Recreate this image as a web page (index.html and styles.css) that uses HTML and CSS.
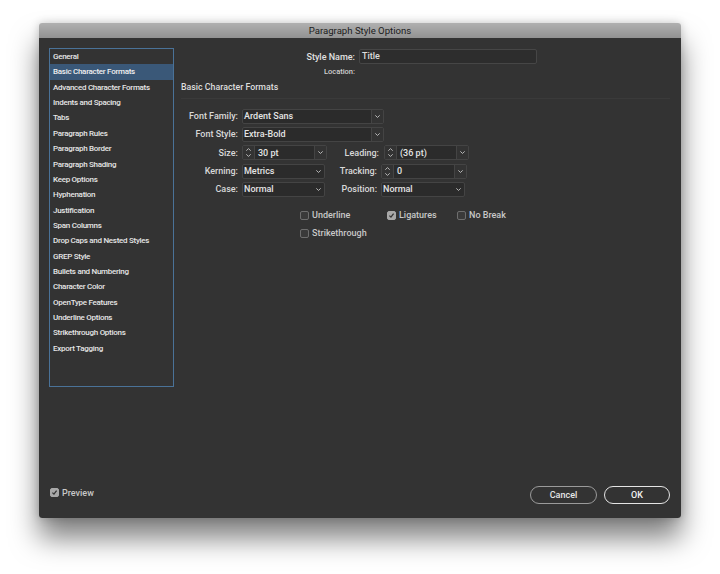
FILE: index.html
```html
<!DOCTYPE html>
<html lang="en">
<head>
    <meta charset="UTF-8">
    <title>Paragraph Style Options</title>
    <link rel="stylesheet" href="styles.css">
</head>
<body>
    <div class="window">
        <div class="titlebar">Paragraph Style Options</div>
        <div class="dialog">
            <div class="main">
                <ul class="sidebar">
                    <li>General</li>
                    <li class="selected">Basic Character Formats</li>
                    <li>Advanced Character Formats</li>
                    <li>Indents and Spacing</li>
                    <li>Tabs</li>
                    <li>Paragraph Rules</li>
                    <li>Paragraph Border</li>
                    <li>Paragraph Shading</li>
                    <li>Keep Options</li>
                    <li>Hyphenation</li>
                    <li>Justification</li>
                    <li>Span Columns</li>
                    <li>Drop Caps and Nested Styles</li>
                    <li>GREP Style</li>
                    <li>Bullets and Numbering</li>
                    <li>Character Color</li>
                    <li>OpenType Features</li>
                    <li>Underline Options</li>
                    <li>Strikethrough Options</li>
                    <li>Export Tagging</li>
                </ul>
                <div class="content">
                    <div class="name-row">
                        <span class="name-label">Style Name:</span>
                        <div class="name-input">Title</div>
                    </div>
                    <div class="location-row">Location:</div>
                    <h2 class="section-title">Basic Character Formats</h2>

                    <div class="form-row">
                        <span class="label">Font Family:</span>
                        <div class="select select-wide"><span class="value">Ardent Sans</span><span class="arrow-btn"><svg viewBox="0 0 8 5"><path d="M1.5 1.2 4 3.6 6.5 1.2"/></svg></span></div>
                    </div>
                    <div class="form-row">
                        <span class="label">Font Style:</span>
                        <div class="select select-wide"><span class="value">Extra-Bold</span><span class="arrow-btn"><svg viewBox="0 0 8 5"><path d="M1.5 1.2 4 3.6 6.5 1.2"/></svg></span></div>
                    </div>
                    <div class="form-row">
                        <span class="label">Size:</span>
                        <div class="select size-size">
                            <span class="spin"><svg viewBox="0 0 8 12"><path d="M1.5 4 4 1.5 6.5 4M1.5 8 4 10.5 6.5 8"/></svg></span>
                            <span class="value">30 pt</span>
                            <span class="arrow-btn"><svg viewBox="0 0 8 5"><path d="M1.5 1.2 4 3.6 6.5 1.2"/></svg></span>
                        </div>
                        <span class="label label-right">Leading:</span>
                        <div class="select leading-size gap-big">
                            <span class="spin"><svg viewBox="0 0 8 12"><path d="M1.5 4 4 1.5 6.5 4M1.5 8 4 10.5 6.5 8"/></svg></span>
                            <span class="value">(36 pt)</span>
                            <span class="arrow-btn"><svg viewBox="0 0 8 5"><path d="M1.5 1.2 4 3.6 6.5 1.2"/></svg></span>
                        </div>
                    </div>
                    <div class="form-row">
                        <span class="label">Kerning:</span>
                        <div class="select select-small"><span class="value">Metrics</span><span class="arrow-plain"><svg viewBox="0 0 8 5"><path d="M1.5 1.2 4 3.6 6.5 1.2"/></svg></span></div>
                        <span class="label label-right">Tracking:</span>
                        <div class="select tracking-size">
                            <span class="spin"><svg viewBox="0 0 8 12"><path d="M1.5 4 4 1.5 6.5 4M1.5 8 4 10.5 6.5 8"/></svg></span>
                            <span class="value">0</span>
                            <span class="arrow-btn"><svg viewBox="0 0 8 5"><path d="M1.5 1.2 4 3.6 6.5 1.2"/></svg></span>
                        </div>
                    </div>
                    <div class="form-row">
                        <span class="label">Case:</span>
                        <div class="select select-small"><span class="value">Normal</span><span class="arrow-plain"><svg viewBox="0 0 8 5"><path d="M1.5 1.2 4 3.6 6.5 1.2"/></svg></span></div>
                        <span class="label label-right">Position:</span>
                        <div class="select position-size"><span class="value">Normal</span><span class="arrow-plain"><svg viewBox="0 0 8 5"><path d="M1.5 1.2 4 3.6 6.5 1.2"/></svg></span></div>
                    </div>

                    <div class="checks">
                        <label class="check"><span class="box"></span>Underline</label>
                        <label class="check"><span class="box on"><svg viewBox="0 0 9 9"><path d="M1.8 4.6 3.8 6.6 7.2 2"/></svg></span>Ligatures</label>
                        <label class="check"><span class="box"></span>No Break</label>
                        <label class="check"><span class="box"></span>Strikethrough</label>
                    </div>
                </div>
            </div>
            <div class="footer">
                <label class="check"><span class="box on"><svg viewBox="0 0 9 9"><path d="M1.8 4.6 3.8 6.6 7.2 2"/></svg></span>Preview</label>
                <div class="buttons">
                    <button class="btn">Cancel</button>
                    <button class="btn btn-default">OK</button>
                </div>
            </div>
        </div>
    </div>
</body>
</html>
```

FILE: styles.css
```css
* {
    box-sizing: border-box;
    margin: 0;
    padding: 0;
}

body {
    background: #ffffff;
    height: 574px;
    overflow: hidden;
    padding: 23px 39px 0;
    font-family: "Roboto", "Liberation Sans", sans-serif;
    font-size: 9px;
    font-weight: 500;
    color: #dcdcdc;
}

.window {
    width: 642px;
    height: 495px;
    display: flex;
    flex-direction: column;
    border-radius: 3px;
    box-shadow: 0 20px 28px rgba(0,0,0,0.5), 0 0 10px rgba(0,0,0,0.2);
}

.titlebar {
    height: 15px;
    line-height: 15px;
    text-align: center;
    font-size: 9.6px;
    font-weight: 400;
    color: #1c1c1c;
    background: linear-gradient(#b0b0b0, #929292);
    border-radius: 3px 3px 0 0;
    flex: none;
}

.dialog {
    flex: 1;
    display: flex;
    flex-direction: column;
    background: #333333;
    border-radius: 0 0 3px 3px;
    padding: 10px 11px 14px 10px;
    opacity: 0.999; /* keeps text grey, no colour fringes */
}

.main {
    flex: 1;
    display: flex;
}

.sidebar {
    list-style: none;
    width: 125px;
    height: 339px;
    border: 1px solid #4a7298;
    flex: none;
    background: #333333;
}

.sidebar li {
    height: 15.37px;
    line-height: 15.37px;
    padding-left: 3px;
    font-size: 8px;
    letter-spacing: -0.28px;
    white-space: nowrap;
    color: #e6e6e6;
}

.sidebar .selected {
    background: #3a5878;
    color: #f0f0f0;
}

.content {
    flex: 1;
    padding-left: 7px;
}

.name-row {
    display: flex;
    align-items: center;
    height: 15px;
    margin-top: 1px;
}

.name-label {
    width: 174px;
    text-align: right;
    color: #e0e0e0;
}

.name-input {
    width: 178px;
    height: 15px;
    line-height: 13px;
    margin-left: 4px;
    padding-left: 2px;
    background: #2d2d2d;
    border: 1px solid #464646;
    border-radius: 2px;
}

.location-row {
    width: 174px;
    text-align: right;
    font-size: 7.5px;
    line-height: 10px;
    margin-top: 3px;
    color: #d0d0d0;
}

.section-title {
    font-size: 8.8px;
    font-weight: 500;
    line-height: 12px;
    height: 18px;
    margin-top: 4px;
    color: #dedede;
    border-bottom: 1px solid #3a3a3a;
}

.form-row {
    display: flex;
    align-items: center;
    height: 18.3px;
}

.section-title + .form-row {
    margin-top: 8px;
}

.label {
    width: 57px;
    text-align: right;
    flex: none;
    color: #d8d8d8;
}

.label-right {
    width: 52px;
}

.select {
    display: flex;
    align-items: center;
    height: 15px;
    margin-left: 4px;
    background: #2b2b2b;
    border: 1px solid #444444;
    border-radius: 2px;
    flex: none;
}

.select-wide { width: 142px; }
.size-size { width: 85px; }
.leading-size { width: 85px; }
.gap-big { margin-left: 5px; }
.select-small { width: 83px; }
.tracking-size { width: 86px; }
.position-size { width: 84px; }

.value {
    flex: 1;
    padding-left: 1px;
    color: #e4e4e4;
    white-space: nowrap;
}

.spin {
    width: 12px;
    height: 100%;
    display: flex;
    align-items: center;
    justify-content: center;
    border-right: 1px solid #444444;
    background: #333333;
    flex: none;
}

.spin svg {
    width: 7px;
    height: 11px;
}

.spin + .value {
    padding-left: 3px;
}

.arrow-btn {
    width: 12px;
    height: 100%;
    display: flex;
    align-items: center;
    justify-content: center;
    border-left: 1px solid #444444;
    background: #333333;
    flex: none;
}

.arrow-plain {
    width: 12px;
    display: flex;
    justify-content: center;
    flex: none;
}

.arrow-btn svg,
.arrow-plain svg {
    width: 7px;
    height: 5px;
}

svg path {
    fill: none;
    stroke: #c8c8c8;
    stroke-width: 1;
}

.checks {
    display: grid;
    grid-template-columns: 87px 70px auto;
    row-gap: 5px;
    margin-left: 119px;
    margin-top: 10.5px;
}

.check {
    display: flex;
    align-items: center;
    gap: 3px;
    height: 13px;
    color: #c8c8c8;
    white-space: nowrap;
}

.box {
    width: 9px;
    height: 9px;
    border: 1px solid #6e6e6e;
    border-radius: 2px;
    background: #3a3a3a;
    flex: none;
}

.box.on {
    background: #a8a8a8;
    border-color: #a8a8a8;
    display: flex;
}

.box.on svg {
    width: 7px;
    height: 7px;
}

.box.on path {
    stroke: #333333;
    stroke-width: 1.6;
}

.footer {
    display: flex;
    align-items: flex-start;
    justify-content: space-between;
    padding-left: 1px;
}

.buttons {
    display: flex;
    gap: 7px;
}

.btn {
    width: 67px;
    height: 18px;
    border: 1px solid #9a9a9a;
    border-radius: 9px;
    background: transparent;
    color: #e6e6e6;
    font: inherit;
}

.btn-default {
    width: 66px;
    border: 1.5px solid #e4e4e4;
    color: #f2f2f2;
}
```
